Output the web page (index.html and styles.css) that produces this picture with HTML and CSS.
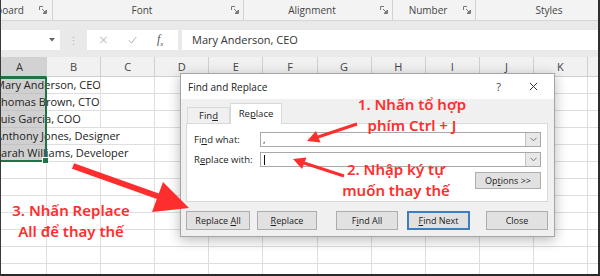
FILE: index.html
```html
<!DOCTYPE html>
<html lang="vi">
<head>
    <meta charset="UTF-8">
    <meta name="viewport" content="width=device-width, initial-scale=1.0">
    <title>Find and Replace</title>
    <link rel="stylesheet" href="styles.css">
</head>
<body>
    <div class="shot">
        <!-- Ribbon group labels -->
        <div class="ribbon">
            <div class="group g-clip"><span class="label">Clipboard</span><svg class="launch" viewBox="0 0 8 8"><path d="M0.5 4V0.5H4M7.5 4v3.5H4M3 3l3.5 3.5M6.5 4.5v2h-2"/></svg></div>
            <div class="group g-font"><span class="label">Font</span><svg class="launch" viewBox="0 0 8 8"><path d="M0.5 4V0.5H4M7.5 4v3.5H4M3 3l3.5 3.5M6.5 4.5v2h-2"/></svg></div>
            <div class="group g-align"><span class="label">Alignment</span><svg class="launch" viewBox="0 0 8 8"><path d="M0.5 4V0.5H4M7.5 4v3.5H4M3 3l3.5 3.5M6.5 4.5v2h-2"/></svg></div>
            <div class="group g-num"><span class="label">Number</span><svg class="launch" viewBox="0 0 8 8"><path d="M0.5 4V0.5H4M7.5 4v3.5H4M3 3l3.5 3.5M6.5 4.5v2h-2"/></svg></div>
            <div class="group g-styles"><span class="label">Styles</span></div>
        </div>

        <!-- Formula bar -->
        <div class="bar">
            <div class="namebox"><svg class="caret" viewBox="0 0 6 4"><path d="M0 0h6L3 3.5z"/></svg></div>
            <div class="grip">⋮</div>
            <div class="fxbox">
                <svg class="fx-icon" viewBox="0 0 10 10"><path d="M1 1l8 8M9 1l-8 8"/></svg>
                <svg class="fx-icon" viewBox="0 0 12 10"><path d="M1 5.5l3.5 3.5L11 1"/></svg>
                <span class="fx">f<sub>x</sub></span>
            </div>
            <div class="formula">Mary Anderson, CEO</div>
        </div>

        <!-- Sheet -->
        <div class="sheet">
            <div class="row head">
                <div class="cell sel">A</div><div class="cell">B</div><div class="cell">C</div><div class="cell">D</div>
                <div class="cell">E</div><div class="cell">F</div><div class="cell">G</div><div class="cell">H</div>
                <div class="cell">I</div><div class="cell">J</div><div class="cell">K</div><div class="cell"></div>
            </div>
            <div class="row"><div class="cell a">Mary Anderson, CEO</div><div class="cell"></div><div class="cell"></div><div class="cell"></div><div class="cell"></div><div class="cell"></div><div class="cell"></div><div class="cell"></div><div class="cell"></div><div class="cell"></div><div class="cell"></div><div class="cell"></div></div>
            <div class="row"><div class="cell a">Thomas Brown, CTO</div><div class="cell"></div><div class="cell"></div><div class="cell"></div><div class="cell"></div><div class="cell"></div><div class="cell"></div><div class="cell"></div><div class="cell"></div><div class="cell"></div><div class="cell"></div><div class="cell"></div></div>
            <div class="row"><div class="cell a">Luis Garcia, COO</div><div class="cell"></div><div class="cell"></div><div class="cell"></div><div class="cell"></div><div class="cell"></div><div class="cell"></div><div class="cell"></div><div class="cell"></div><div class="cell"></div><div class="cell"></div><div class="cell"></div></div>
            <div class="row"><div class="cell a">Anthony Jones, Designer</div><div class="cell span2"></div><div class="cell"></div><div class="cell"></div><div class="cell"></div><div class="cell"></div><div class="cell"></div><div class="cell"></div><div class="cell"></div><div class="cell"></div><div class="cell"></div></div>
            <div class="row"><div class="cell a">Sarah Williams, Developer</div><div class="cell span2"></div><div class="cell"></div><div class="cell"></div><div class="cell"></div><div class="cell"></div><div class="cell"></div><div class="cell"></div><div class="cell"></div><div class="cell"></div><div class="cell"></div></div>
            <div class="row"><div class="cell"></div><div class="cell"></div><div class="cell"></div><div class="cell"></div><div class="cell"></div><div class="cell"></div><div class="cell"></div><div class="cell"></div><div class="cell"></div><div class="cell"></div><div class="cell"></div><div class="cell"></div></div>
            <div class="row"><div class="cell"></div><div class="cell"></div><div class="cell"></div><div class="cell"></div><div class="cell"></div><div class="cell"></div><div class="cell"></div><div class="cell"></div><div class="cell"></div><div class="cell"></div><div class="cell"></div><div class="cell"></div></div>
            <div class="row"><div class="cell"></div><div class="cell"></div><div class="cell"></div><div class="cell"></div><div class="cell"></div><div class="cell"></div><div class="cell"></div><div class="cell"></div><div class="cell"></div><div class="cell"></div><div class="cell"></div><div class="cell"></div></div>
            <div class="row"><div class="cell"></div><div class="cell"></div><div class="cell"></div><div class="cell"></div><div class="cell"></div><div class="cell"></div><div class="cell"></div><div class="cell"></div><div class="cell"></div><div class="cell"></div><div class="cell"></div><div class="cell"></div></div>
            <div class="row"><div class="cell"></div><div class="cell"></div><div class="cell"></div><div class="cell"></div><div class="cell"></div><div class="cell"></div><div class="cell"></div><div class="cell"></div><div class="cell"></div><div class="cell"></div><div class="cell"></div><div class="cell"></div></div>
            <div class="row"><div class="cell"></div><div class="cell"></div><div class="cell"></div><div class="cell"></div><div class="cell"></div><div class="cell"></div><div class="cell"></div><div class="cell"></div><div class="cell"></div><div class="cell"></div><div class="cell"></div><div class="cell"></div></div>
            <div class="row"><div class="cell"></div><div class="cell"></div><div class="cell"></div><div class="cell"></div><div class="cell"></div><div class="cell"></div><div class="cell"></div><div class="cell"></div><div class="cell"></div><div class="cell"></div><div class="cell"></div><div class="cell"></div></div>

            <div class="selection"><span class="handle"></span></div>
        </div>

        <!-- Find and Replace dialog -->
        <div class="dialog">
            <div class="dlg-title">
                <span class="dlg-name">Find and Replace</span>
                <span class="dlg-help">?</span>
                <svg class="dlg-close" viewBox="0 0 10 10"><path d="M1 1l8 8M9 1l-8 8"/></svg>
            </div>
            <div class="dlg-body">
                <div class="tabs">
                    <div class="tab">Fin<u>d</u></div>
                    <div class="tab active">Re<u>p</u>lace</div>
                </div>
                <div class="panel">
                    <div class="field">
                        <span class="field-label">Fi<u>n</u>d what:</span>
                        <div class="combo"><span class="value">,</span><span class="drop"><svg viewBox="0 0 8 5"><path d="M0.5 0.5l3.5 3.5 3.5-3.5"/></svg></span></div>
                    </div>
                    <div class="field">
                        <span class="field-label">R<u>e</u>place with:</span>
                        <div class="combo"><span class="cursor"></span><span class="drop"><svg viewBox="0 0 8 5"><path d="M0.5 0.5l3.5 3.5 3.5-3.5"/></svg></span></div>
                    </div>
                    <div class="options-row">
                        <div class="btn options">Op<u>t</u>ions &gt;&gt;</div>
                    </div>
                </div>
                <div class="buttons">
                    <div class="btn b-all">Replace <u>A</u>ll</div>
                    <div class="btn b-rep"><u>R</u>eplace</div>
                    <div class="btn b-findall">F<u>i</u>nd All</div>
                    <div class="btn b-next"><u>F</u>ind Next</div>
                    <div class="btn b-close">Close</div>
                </div>
            </div>
        </div>

        <!-- Annotations -->
        <svg class="marks" viewBox="0 0 600 276">
            <line x1="357" y1="124" x2="318" y2="137" class="thin"/>
            <polygon points="307,141 320.5,142.5 316,131"/>
            <line x1="344" y1="176" x2="304" y2="163" class="thin"/>
            <polygon points="293,159 306.5,157.5 302,169"/>
            <line x1="73" y1="166" x2="160" y2="197" class="thick"/>
            <polygon points="189,208 152,212 163,182"/>
        </svg>
        <div class="note n1">1. Nhấn tổ hợp<br>phím Ctrl + J</div>
        <div class="note n2">2. Nhập ký tự<br>muốn thay thế</div>
        <div class="note n3">3. Nhấn Replace<br>All để thay thế</div>
    </div>
</body>
</html>
```

FILE: styles.css
```css
body {
    margin: 0;
    padding: 0;
    background: #fff;
    font-family: "Open Sans", "Noto Sans", sans-serif;
}

.shot {
    position: relative;
    width: 600px;
    height: 276px;
    overflow: hidden;
    background: #fff;
}

/* dark frame round the picture */
.shot::after {
    content: "";
    position: absolute;
    inset: 0;
    border-left: 1px solid #3a3a3a;
    border-right: 2px solid #2e2e2e;
    border-bottom: 2px solid #2a2a2a;
    pointer-events: none;
}

/* Ribbon */
.ribbon {
    display: flex;
    height: 21px;
    background: #f3f3f3;
    border-bottom: 1px solid #d6d6d6;
    box-sizing: border-box;
}

.group {
    display: flex;
    align-items: center;
    flex: none;
    overflow: hidden;
    border-right: 1px solid #d2d2d2;
    box-sizing: border-box;
    padding-right: 4px;
}

.label {
    font-size: 10px;
    color: #454545;
    white-space: nowrap;
}

.launch {
    width: 8px;
    height: 8px;
    flex: none;
    fill: none;
    stroke: #777;
    stroke-width: 1;
}

.g-clip { width: 53px; justify-content: flex-end; padding-right: 5px; }
.g-clip .label { margin-right: 15px; }
.g-font { width: 191px; }
.g-align { width: 149px; }
.g-num { width: 83px; }
.g-styles { width: 150px; border-right: none; }
.g-font .label, .g-align .label, .g-num .label, .g-styles .label { flex: 1; text-align: center; }

/* Formula bar */
.bar {
    display: flex;
    align-items: center;
    height: 36px;
    padding: 9px 0 7px;
    box-sizing: border-box;
    background: #e9e9e9;
}

.namebox {
    width: 60px;
    height: 20px;
    background: #fff;
    display: flex;
    align-items: center;
    justify-content: flex-end;
    padding-right: 5px;
    box-sizing: border-box;
}

.caret {
    width: 6px;
    height: 4px;
    fill: #666;
}

.grip {
    width: 27px;
    text-align: center;
    color: #b0b0b0;
    font-size: 11px;
}

.fxbox {
    width: 91px;
    height: 20px;
    background: #fff;
    display: flex;
    align-items: center;
    gap: 20px;
    padding-left: 12px;
    box-sizing: border-box;
}

.fx-icon {
    width: 9px;
    height: 8px;
    fill: none;
    stroke: #a8a8a8;
    stroke-width: 1.2;
}

.fx {
    font-family: "Liberation Serif", serif;
    font-style: italic;
    font-size: 12px;
    color: #555;
}

.fx sub { font-size: 7px; }

.formula {
    margin-left: 4px;
    flex: 1;
    height: 20px;
    background: #fff;
    font-size: 11px;
    line-height: 20px;
    color: #333;
    padding-left: 10px;
}

/* Sheet */
.sheet {
    position: relative;
    margin-left: -7px;
}

.row {
    display: flex;
    height: 17px;
}

.cell {
    width: 54.1px;
    flex: none;
    box-sizing: border-box;
    border-right: 1px solid #dedede;
    border-bottom: 1px solid #dedede;
    font-size: 11px;
    line-height: 16px;
    color: #222;
    white-space: nowrap;
}

.span2 { width: 108.2px; }

/* selected cells of column A; their text runs on into B and C */
.cell.a {
    background-color: #d0d0d0;
    border-right: none;
    border-bottom-color: #c4c4c4;
    padding-left: 2px;
    overflow: visible;
}

.head {
    height: 20px;
    background: #f1f1f1;
}

.head .cell {
    text-align: center;
    line-height: 19px;
    color: #444;
    border-right-color: #d0d0d0;
    border-bottom-color: #cfcfcf;
}

.head .cell.sel {
    background: #d2d2d2;
    border-bottom: 1px solid #217346;
    color: #333;
}

.selection {
    position: absolute;
    left: 0;
    top: 20px;
    width: 54px;
    height: 85px;
    border: 2px solid #217346;
    box-sizing: border-box;
}

.handle {
    position: absolute;
    right: -4px;
    bottom: -4px;
    width: 5px;
    height: 5px;
    background: #217346;
    border: 1px solid #fff;
}

/* Dialog */
.dialog {
    position: absolute;
    left: 180px;
    top: 73px;
    width: 375px;
    height: 164px;
    box-sizing: border-box;
    background: #f0f0f0;
    border: 1px solid #a5a5a5;
    box-shadow: 0 3px 12px rgba(0, 0, 0, 0.28);
    font-size: 9.5px;
    color: #222;
}

.dlg-title {
    height: 25px;
    background: #fff;
    display: flex;
    align-items: center;
    padding-left: 7px;
}

.dlg-name {
    flex: 1;
    font-size: 10px;
    color: #222;
}

.dlg-help {
    font-size: 11px;
    color: #444;
    margin-right: 28px;
}

.dlg-close {
    width: 9px;
    height: 9px;
    margin-right: 16px;
    fill: none;
    stroke: #333;
    stroke-width: 1.1;
}

.dlg-body {
    padding: 4px 0 0 5px;
}

.tabs {
    display: flex;
    align-items: flex-end;
    height: 20px;
    margin-left: 1px;
}

.tab {
    height: 16px;
    width: 43px;
    box-sizing: border-box;
    border: 1px solid #d9d9d9;
    border-bottom: none;
    background: #f0f0f0;
    text-align: center;
    line-height: 16px;
}

.tab.active {
    height: 21px;
    width: 52px;
    background: #fff;
    line-height: 19px;
    position: relative;
    z-index: 1;
    margin-bottom: -1px;
}

.panel {
    width: 362px;
    height: 79px;
    box-sizing: border-box;
    background: #fff;
    border: 1px solid #d9d9d9;
    padding: 8px 6px 0 7px;
}

.field {
    display: flex;
    align-items: center;
    height: 15px;
    margin-bottom: 5px;
}

.field-label {
    width: 66px;
    flex: none;
}

.combo {
    flex: 1;
    height: 15px;
    box-sizing: border-box;
    border: 1px solid #a9a9a9;
    display: flex;
    align-items: center;
    position: relative;
}

.value {
    padding-left: 2px;
    line-height: 8px;
    flex: 1;
}

.cursor {
    width: 1px;
    height: 10px;
    background: #111;
    margin-left: 3px;
    flex: none;
}

.drop {
    margin-left: auto;
    width: 14px;
    height: 13px;
    background: #e8e8e8;
    border-left: 1px solid #c4c4c4;
    display: flex;
    align-items: center;
    justify-content: center;
}

.drop svg {
    width: 7px;
    height: 5px;
    fill: none;
    stroke: #666;
    stroke-width: 1;
}

.options-row {
    display: flex;
    justify-content: flex-end;
    margin-top: 5px;
}

.btn {
    height: 19px;
    box-sizing: border-box;
    background: #e1e1e1;
    border: 1px solid #adadad;
    text-align: center;
    line-height: 17px;
    font-size: 9px;
    color: #222;
}

.options {
    width: 66px;
    height: 17px;
    line-height: 15px;
}

.buttons {
    display: flex;
    margin-top: 9px;
}

.b-all { width: 64px; }
.b-rep { width: 60px; margin-left: 7px; }
.b-findall { width: 62px; margin-left: 19px; }
.b-next { width: 63px; margin-left: 9px; border: 2px solid #3b7fc0; line-height: 15px; }
.b-close { width: 62px; margin-left: 16px; }

/* Annotations */
.marks {
    position: absolute;
    left: 0;
    top: 0;
    width: 600px;
    height: 276px;
    fill: #ff2e2e;
}

.marks line { stroke: #ff2e2e; }
.marks .thin { stroke-width: 3; }
.marks .thick { stroke-width: 6; }

.note {
    position: absolute;
    color: #ff2e2e;
    font-family: "Noto Sans", sans-serif;
    font-weight: 600;
    font-size: 15px;
    line-height: 21px;
    text-align: center;
    white-space: nowrap;
}

.n1 { left: 352px; top: 94px; width: 120px; }
.n2 { left: 336px; top: 159px; width: 120px; }
.n3 { left: 6px; top: 200px; width: 130px; }
```
